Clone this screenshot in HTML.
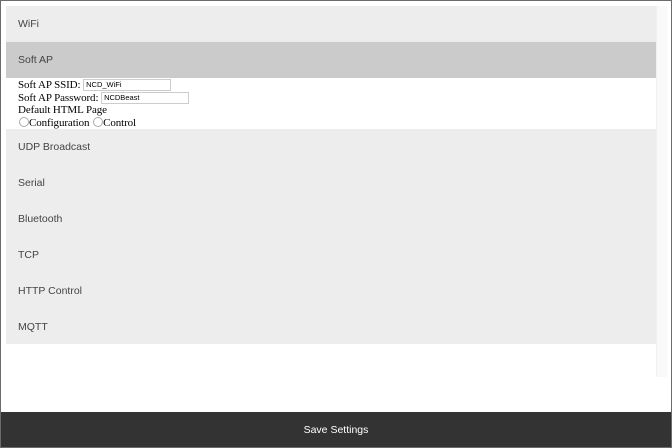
<!DOCTYPE html>
<html><head><style>
html,body{margin:0;padding:0;width:672px;height:448px;overflow:hidden;background:#fff}
body{position:relative;box-sizing:border-box;border:1px solid #6b6b6b;font-family:"Liberation Sans",sans-serif}
.panel{position:absolute;left:5px;top:5px;width:650px}
.row{height:36px;background:#ededed;color:#444;font-size:10.5px;line-height:36px;padding-left:12px;box-sizing:border-box}
.sel{background:#cbcbcb}
.form{height:51px;background:#fff;font-family:"Liberation Serif",serif;font-size:11px;line-height:12.5px;padding:1px 0 0 12px;box-sizing:border-box;color:#000;letter-spacing:-0.1px}
.inp{display:inline-block;border:1px solid #ccc;height:10px;font-family:"Liberation Sans",sans-serif;font-size:7.5px;line-height:10px;padding:0 2px;vertical-align:middle;letter-spacing:0}
.rad{display:inline-block;width:10px;height:10px;border:1px solid #aaa;border-radius:50%;vertical-align:-1px;box-sizing:border-box;margin-left:1px}
.sb{position:absolute;left:655px;top:5px;width:10px;height:371px;background:#f9f9f9;border-left:1px solid #f0f0f0}
.foot{position:absolute;left:0;right:0;top:411px;bottom:0;background:#333;color:#fff;font-size:10.5px;text-align:center;line-height:36px}
</style></head><body>
<div class="panel">
<div class="row">WiFi</div>
<div class="row sel">Soft AP</div>
<div class="form">
<div>Soft AP SSID: <span class="inp" style="width:82px">NCD_WiFi</span></div>
<div>Soft AP Password: <span class="inp" style="width:82px">NCDBeast</span></div>
<div>Default HTML Page</div>
<div><span class="rad"></span>Configuration <span class="rad"></span>Control</div>
</div>
<div class="row">UDP Broadcast</div>
<div class="row">Serial</div>
<div class="row">Bluetooth</div>
<div class="row">TCP</div>
<div class="row">HTTP Control</div>
<div class="row" style="height:35px">MQTT</div>
</div>
<div class="sb"></div>
<div class="foot">Save Settings</div>
</body></html>
